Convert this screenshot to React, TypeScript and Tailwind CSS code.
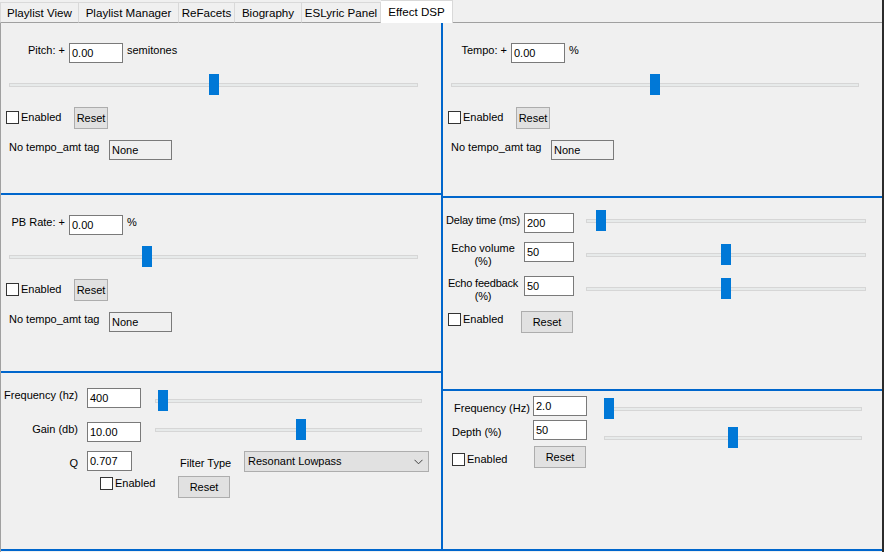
import React from 'react'

const BLUE = 'bg-[#0066cc]'

const TextBox: React.FC<{ value: string; className?: string; disabled?: boolean }> = ({
  value,
  className = '',
  disabled,
}) => (
  <div
    className={`h-[20px] shrink-0 border border-[#7a7a7a] px-[2px] leading-[18px] ${
      disabled ? 'bg-[#f0f0f0]' : 'bg-white'
    } ${className}`}
  >
    {value}
  </div>
)

const Button: React.FC<{ className?: string }> = ({ className = '' }) => (
  <div
    className={`h-[22px] shrink-0 border border-[#adadad] bg-[#e1e1e1] text-center leading-[20px] ${className}`}
  >
    Reset
  </div>
)

const Check: React.FC<{ className?: string }> = ({ className = '' }) => (
  <div className={`flex shrink-0 items-start ${className}`}>
    <div className="h-[13px] w-[13px] border border-[#333333] bg-white" />
    <span className="ml-[2px] leading-[13px]">Enabled</span>
  </div>
)

const Slider: React.FC<{ width: number; pct: number; className?: string }> = ({
  width,
  pct,
  className = '',
}) => (
  <div className={`relative h-[21px] shrink-0 ${className}`} style={{ width }}>
    <div className="mt-[9px] h-[4px] border border-[#d6d6d6] bg-[#e7eaea]" />
    <div
      className="absolute top-0 h-[21px] w-[10px] bg-[#0078d7]"
      style={{ left: Math.round(pct * (width - 10)) }}
    />
  </div>
)

// pitch / tempo / playback rate panels share one layout
const ShiftPanel: React.FC<{ label: string; unit: string; pct: number; track: number }> = ({
  label,
  unit,
  pct,
  track,
}) => (
  <div className="flex flex-col pt-[20px]">
    <div className="flex h-[20px] items-start">
      <span className="w-[64px] shrink-0 text-right leading-[14px]">{label}</span>
      <TextBox value="0.00" className="ml-[4px] w-[54px]" />
      <span className="ml-[4px] leading-[14px]">{unit}</span>
    </div>
    <Slider width={track} pct={pct} className="ml-[8px] mt-[11px]" />
    <div className="mt-[12px] flex h-[22px] items-start">
      <div className="w-[73px] shrink-0">
        <Check className="ml-[5px] mt-[4px]" />
      </div>
      <Button className="w-[34px]" />
    </div>
    <div className="mt-[11px] flex h-[20px] items-start">
      <span className="ml-[8px] w-[100px] shrink-0 leading-[14px]">No tempo_amt tag</span>
      <TextBox value="None" disabled className="w-[63px]" />
    </div>
  </div>
)

const EchoPanel: React.FC = () => (
  <div className="flex flex-col pt-[12px]">
    <div className="flex h-[22px] items-start">
      <span className="mt-[3px] w-[80px] shrink-0 text-center leading-[14px] tracking-[-0.2px]">
        Delay time (ms)
      </span>
      <TextBox value="200" className="ml-[1px] mt-[3px] h-[19px] w-[50px]" />
      <Slider width={280} pct={0.037} className="ml-[12px]" />
    </div>
    <div className="mt-[10px] flex h-[23px] items-start">
      <span className="w-[80px] shrink-0 text-center leading-[13px]">
        Echo volume
        <br />
        (%)
      </span>
      <TextBox value="50" className="ml-[1px] h-[19px] w-[50px]" />
      <Slider width={280} pct={0.5} className="ml-[12px] mt-[2px]" />
    </div>
    <div className="mt-[11px] flex h-[23px] items-start">
      <span className="mt-[1px] w-[80px] shrink-0 text-center leading-[13px] tracking-[-0.2px]">
        Echo feedback
        <br />
        (%)
      </span>
      <TextBox value="50" className="ml-[1px] h-[19px] w-[50px]" />
      <Slider width={280} pct={0.5} className="ml-[12px] mt-[2px]" />
    </div>
    <div className="mt-[12px] flex h-[22px] items-start">
      <div className="w-[78px] shrink-0">
        <Check className="ml-[5px] mt-[2px]" />
      </div>
      <Button className="w-[52px]" />
    </div>
  </div>
)

const EqPanel: React.FC = () => (
  <div className="flex flex-col pt-[15px]">
    <div className="flex h-[23px] items-start">
      <span className="w-[77px] shrink-0 text-right leading-[14px]">Frequency (hz)</span>
      <TextBox value="400" className="ml-[9px] w-[54px]" />
      <Slider width={267} pct={0.012} className="ml-[14px] mt-[2px]" />
    </div>
    <div className="mt-[8px] flex h-[23px] items-start">
      <span className="mt-[3px] w-[77px] shrink-0 text-right leading-[14px]">Gain (db)</span>
      <TextBox value="10.00" className="ml-[9px] mt-[3px] w-[54px]" />
      <Slider width={267} pct={0.549} className="ml-[14px]" />
    </div>
    <div className="mt-[9px] flex h-[21px] items-start">
      <span className="mt-[5px] w-[77px] shrink-0 text-right leading-[14px]">Q</span>
      <TextBox value="0.707" className="ml-[9px] w-[45px]" />
      <span className="ml-[48px] mt-[5px] w-[64px] shrink-0 leading-[14px]">Filter Type</span>
      <div className="flex h-[21px] w-[185px] shrink-0 items-center justify-between border border-[#adadad] bg-[#e1e1e1] pl-[3px] pr-[5px]">
        <span className="leading-[19px]">Resonant Lowpass</span>
        <svg width="9" height="6" viewBox="0 0 9 6" fill="none">
          <polyline points="0.5,0.8 4.5,4.8 8.5,0.8" stroke="#404040" strokeWidth="1" />
        </svg>
      </div>
    </div>
    <div className="mt-[4px] flex h-[22px] items-start">
      <div className="ml-[99px] w-[78px] shrink-0">
        <Check className="mt-[1px]" />
      </div>
      <Button className="w-[52px]" />
    </div>
  </div>
)

const TremoloPanel: React.FC = () => (
  <div className="flex flex-col pt-[5px]">
    <div className="flex h-[23px] items-start">
      <span className="ml-[11px] mt-[5px] w-[79px] shrink-0 leading-[14px]">Frequency (Hz)</span>
      <TextBox value="2.0" className="w-[54px]" />
      <Slider width={258} pct={0} className="ml-[17px] mt-[2px]" />
    </div>
    <div className="mt-[1px] flex h-[26px] items-start">
      <span className="ml-[9px] mt-[5px] w-[81px] shrink-0 leading-[14px]">Depth (%)</span>
      <TextBox value="50" className="w-[54px]" />
      <Slider width={258} pct={0.5} className="ml-[17px] mt-[7px]" />
    </div>
    <div className="flex h-[22px] items-start">
      <div className="ml-[9px] w-[82px] shrink-0">
        <Check className="mt-[7px]" />
      </div>
      <Button className="w-[52px]" />
    </div>
  </div>
)

const tabs = [
  { name: 'Playlist View', w: 'w-[79px] border-l' },
  { name: 'Playlist Manager', w: 'w-[100px]' },
  { name: 'ReFacets', w: 'w-[56px]' },
  { name: 'Biography', w: 'w-[67px]' },
  { name: 'ESLyric Panel', w: 'w-[79px]' },
]

export default function App() {
  return (
    <div className="flex h-[552px] w-[884px] overflow-hidden bg-[#f0f0f0] font-['Liberation_Sans',Arial,sans-serif] text-[11px] text-black">
      <div className="flex w-[882px] flex-col">
        <div className="flex h-[23px] shrink-0 items-end text-[11.6px]">
          {tabs.map((t) => (
            <div
              key={t.name}
              className={`h-[21px] shrink-0 border-r border-t border-[#d9d9d9] border-b-[#a0a0a0] border-b text-center leading-[19px] ${t.w}`}
            >
              {t.name}
            </div>
          ))}
          <div className="h-[23px] w-[72px] shrink-0 border-r border-t border-[#d9d9d9] bg-white pt-[3px] text-center leading-[15px]">
            Effect DSP
          </div>
          <div className="h-[1px] flex-1 bg-[#a0a0a0]" />
        </div>
        <div className="flex flex-1">
          <div className="flex w-[441px] shrink-0 flex-col border-l border-[#a0a0a0]">
            <div className="h-[172px] shrink-0 border-b-2 border-[#0066cc]">
              <ShiftPanel label="Pitch: +" unit="semitones" pct={0.5} track={409} />
            </div>
            <div className="h-[178px] shrink-0 border-b-2 border-[#0066cc]">
              <ShiftPanel label="PB Rate: +" unit="%" pct={0.333} track={409} />
            </div>
            <div className="h-[178px] shrink-0 border-b-2 border-[#0066cc]">
              <EqPanel />
            </div>
          </div>
          <div className={`h-[528px] w-[2px] shrink-0 ${BLUE}`} />
          <div className="flex w-[439px] shrink-0 flex-col">
            <div className="h-[175px] shrink-0 border-b-2 border-[#0066cc]">
              <ShiftPanel label="Tempo: +" unit="%" pct={0.5} track={408} />
            </div>
            <div className="h-[193px] shrink-0 border-b-2 border-[#0066cc]">
              <EchoPanel />
            </div>
            <div className="h-[160px] shrink-0 border-b-2 border-[#0066cc]">
              <TremoloPanel />
            </div>
          </div>
        </div>
      </div>
      <div className="w-[2px] shrink-0 bg-[#2b2b2b]" />
    </div>
  )
}
